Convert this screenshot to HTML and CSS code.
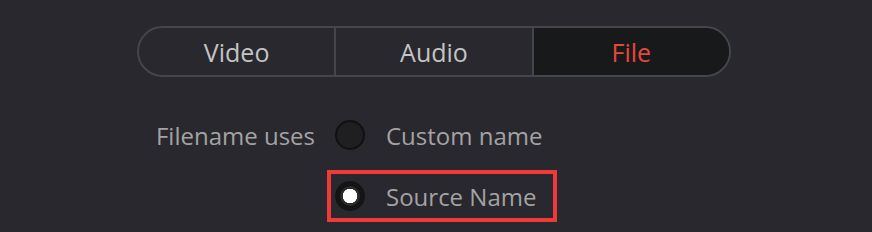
FILE: index.html
```html
<!DOCTYPE html>
<html lang="en">
<head>
   <meta charset="UTF-8">
   <meta name="viewport" content="width=device-width">
   <title>Render Settings - File</title>
   <link rel="stylesheet" href="styles.css">
</head>
<body>
   <div class="tabs">
       <div class="tab">Video</div>
       <div class="tab">Audio</div>
       <div class="tab active">File</div>
   </div>

   <div class="form">
       <div class="label">Filename uses</div>
       <div class="option">
           <span class="radio"></span>
           <span class="option-text">Custom name</span>
       </div>
       <div></div>
       <div class="option highlight">
           <span class="radio checked"></span>
           <span class="option-text">Source Name</span>
       </div>
   </div>
</body>
</html>
```

FILE: styles.css
```css
body {
    font-family: "Open Sans", Arial, sans-serif;
    background-color: #28282e;
    margin: 0;
    padding-top: 26px;
}
.tabs {
    display: flex;
    width: 594px;
    height: 51px;
    margin-left: 137px;
    box-sizing: border-box;
    border: 2px solid #45464b;
    border-radius: 26px;
    overflow: hidden;
}
.tab {
    flex: 1;
    display: flex;
    align-items: center;
    justify-content: center;
    color: #c4c4c4;
    font-size: 25px;
    font-weight: 500;
}
.tab + .tab { border-left: 2px solid #45464b; }
.tab.active {
    background-color: #18191b;
    color: #e8473b;
}
.form {
    display: grid;
    grid-template-columns: 315px auto;
    column-gap: 12px;
    row-gap: 9px;
    margin-top: 32px;
    justify-content: start;
    align-items: center;
}
.label {
    text-align: right;
    color: #a3a3a3;
    font-size: 24px;
}
.option {
    display: flex;
    align-items: center;
    gap: 21px;
    height: 52px;
    box-sizing: border-box;
    border: 4px solid transparent;
    padding: 0 17px 0 4px;
    justify-self: start;
    color: #a3a3a3;
    font-size: 24px;
}
.option.highlight { border-color: #f03a3a; }
.radio {
    width: 30px;
    height: 30px;
    box-sizing: border-box;
    border-radius: 50%;
    border: 2px solid #111112;
    background-color: #1f1f21;
}
.radio.checked {
    border: none;
    background: radial-gradient(circle, #ffffff 0 7px, #2b2b2e 7.5px 9.5px, #141415 10px);
}
```
